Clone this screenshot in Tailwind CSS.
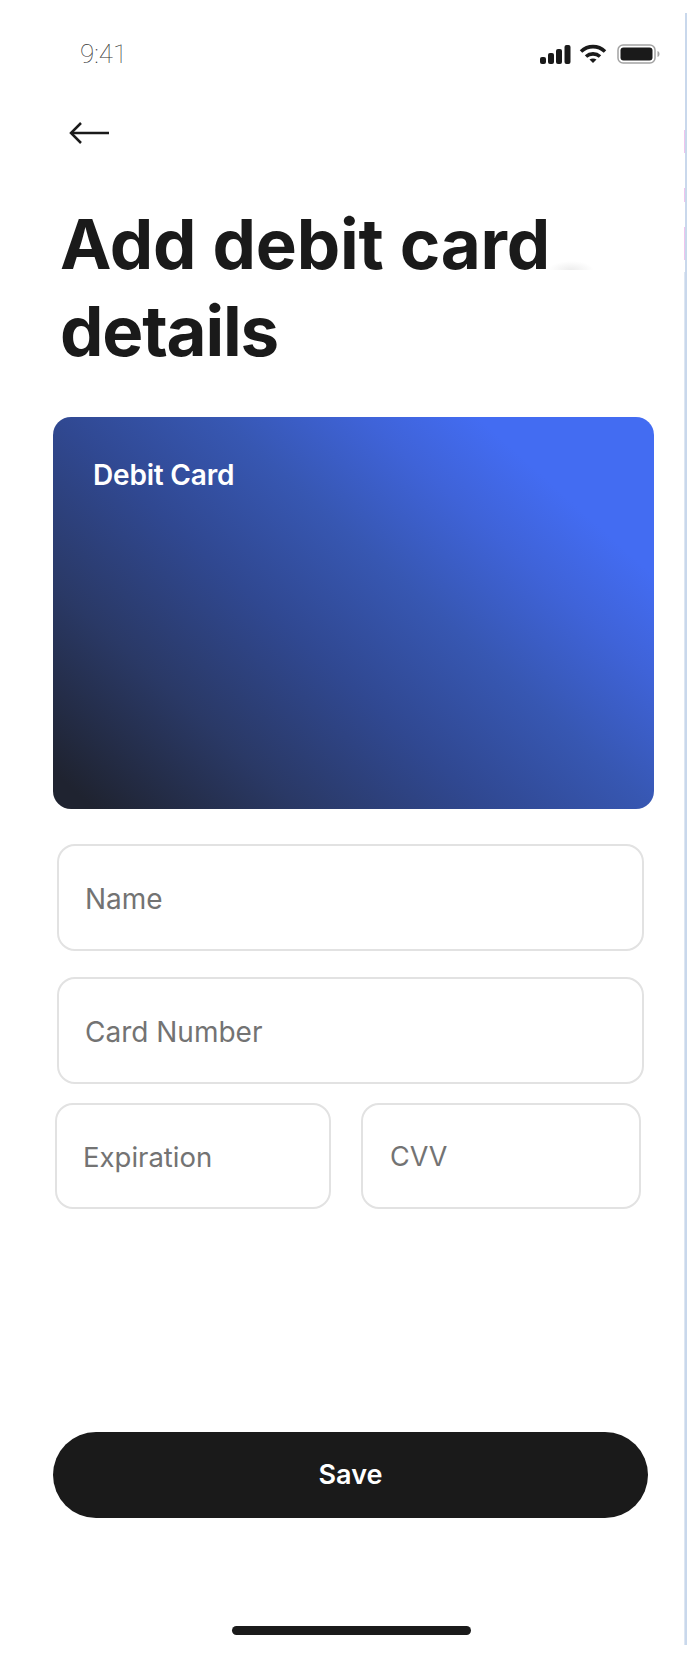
<!DOCTYPE html>
<html lang="en">
<head>
  <meta charset="UTF-8" />
  <meta name="viewport" content="width=device-width,initial-scale=1.0" />
  <title>Add debit card details</title>
  <script src="https://cdn.jsdelivr.net/npm/@tailwindcss/browser@4"></script>
</head>
<body class="bg-white font-['Inter',sans-serif] text-[#1a1a1a]">
  <div class="w-[688px] h-[1656px] flex overflow-hidden">
    <main class="w-[685px] flex flex-col">
      <!-- Status bar -->
      <div class="flex items-center justify-between h-[24px] mt-[42px] pl-[80px] pr-[25px]">
        <span class="font-['Roboto',sans-serif] font-thin text-[26px] text-[#333]">9:41</span>
        <div class="flex items-center gap-[8px]">
          <svg width="31" height="19" viewBox="0 0 31 19" fill="#1a1a1a">
            <rect x="0" y="12" width="6" height="7" rx="2"/>
            <rect x="8" y="8" width="6" height="11" rx="2"/>
            <rect x="16" y="4" width="6" height="15" rx="2"/>
            <rect x="24.500" y="0" width="6" height="19" rx="2"/>
          </svg>
          <svg width="28" height="20" viewBox="0 0 28 20" fill="none" stroke="#1a1a1a" stroke-width="3.600">
            <path d="M2 7.500C9 1 19 1 26 7.500"/>
            <path d="M7 12.500C11 9 17 9 21 12.500"/>
            <path d="M10.500 15.500L14 19L17.500 15.500C15.500 14 12.500 14 10.500 15.500Z" fill="#1a1a1a" stroke="none"/>
          </svg>
          <svg class="ml-[2px]" width="43" height="20" viewBox="0 0 43 20" fill="none">
            <rect x="1" y="1" width="37" height="18" rx="5" stroke="#a3a3a3" stroke-width="1.500"/>
            <rect x="3.500" y="3.500" width="32" height="13" rx="3" fill="#1a1a1a"/>
            <path d="M40.500 7v6c1.500-.5 2-1.800 2-3s-.5-2.500-2-3z" fill="#a3a3a3"/>
          </svg>
        </div>
      </div>

      <!-- Back -->
      <svg class="ml-[69px] mt-[55px]" width="41" height="24" viewBox="0 0 41 24" fill="none" stroke="#1a1a1a" stroke-width="2.500">
        <path d="M40 12H2"/>
        <path d="M12 2L2 12L12 22"/>
      </svg>

      <!-- Title -->
      <div class="relative">
        <h1 class="ml-[60px] mt-[56px] font-bold text-[69px] leading-[87px] tracking-[-0.2px]">Add debit card<br><span class="tracking-[-1.2px]">details</span></h1>
        <div class="absolute left-[548px] top-[116px] w-[46px] h-[9px] bg-[radial-gradient(ellipse_at_bottom,#ededed,#ffffff_70%)]"></div>
      </div>

      <!-- Card -->
      <div class="ml-[53px] mt-[42px] w-[601px] h-[392px] rounded-[18px] bg-[linear-gradient(42deg,#1f2330_4%,#2a3966_24%,#304891_42%,#3757b2_58%,#3f63d8_72%,#436cf2_83%)] pl-[40px] pt-[41px]">
        <p class="text-white font-semibold text-[28px] leading-[34px] tracking-[-0.2px]">Debit Card</p>
      </div>

      <!-- Form -->
      <div class="ml-[57px] mt-[35px] w-[587px] h-[107px] rounded-[18px] border-2 border-[#e2e2e2] flex items-center pl-[26px] pt-[3px] text-[28px] text-[#737373]">Name</div>
      <div class="ml-[57px] mt-[26px] w-[587px] h-[107px] rounded-[18px] border-2 border-[#e2e2e2] flex items-center pl-[26px] pt-[3px] text-[28px] text-[#737373]">Card Number</div>
      <div class="ml-[55px] mt-[19px] flex gap-[30px]">
        <div class="w-[276px] h-[106px] rounded-[18px] border-2 border-[#e2e2e2] flex items-center pl-[26px] pt-[3px] text-[27.500px] text-[#737373]">Expiration</div>
        <div class="w-[280px] h-[106px] rounded-[18px] border-2 border-[#e2e2e2] flex items-center pl-[27px] pt-[3px] text-[27px] text-[#737373]">CVV</div>
      </div>

      <!-- Save -->
      <button class="ml-[53px] mt-[223px] w-[595px] h-[86px] rounded-full bg-[#1a1a1a] text-white font-semibold text-[27px]">Save</button>

      <!-- Home indicator -->
      <div class="ml-[232px] mt-[108px] w-[239px] h-[9px] rounded-full bg-[#1a1a1a]"></div>
    </main>

    <!-- Edge of the artboard -->
    <div class="relative w-[2px] h-[1632px] mt-[13px] bg-[#c9d8ec]">
      <span class="absolute -left-[1px] top-[117px] w-[1px] h-[23px] bg-[#f0c4ee]"></span>
      <span class="absolute -left-[1px] top-[175px] w-[1px] h-[14px] bg-[#f0c4ee]"></span>
      <span class="absolute -left-[1px] top-[214px] w-[1px] h-[33px] bg-[#f0c4ee]"></span>
      <span class="absolute -left-[1px] top-[259px] bottom-0 w-[1px] bg-[#dde6f2]"></span>
    </div>
  </div>
</body>
</html>
